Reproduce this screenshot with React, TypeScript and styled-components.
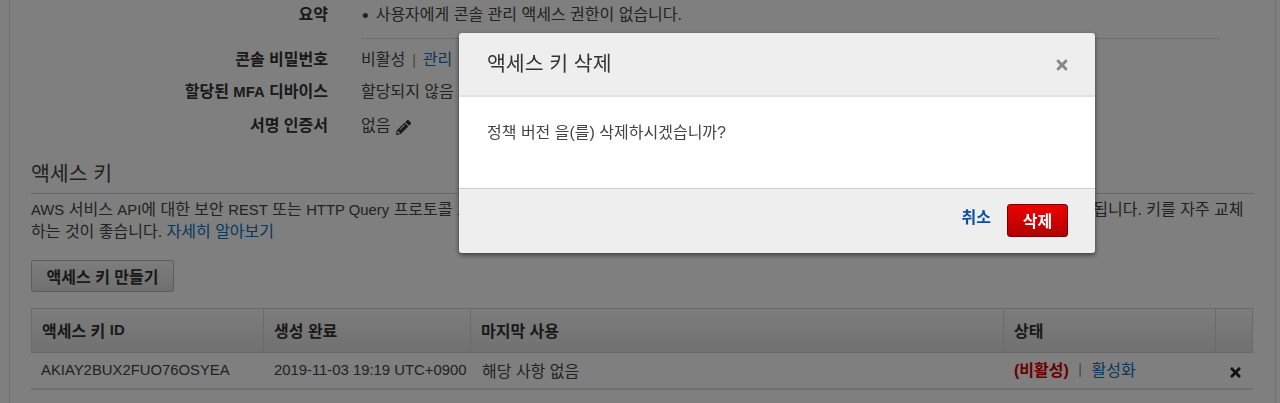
import styled, { createGlobalStyle } from "styled-components";
import { FaPencilAlt, FaTimes } from "react-icons/fa";

const GlobalStyle = createGlobalStyle`
  html, body {
    margin: 0;
    padding: 0;
    height: 100%;
    overflow: hidden;
    background: #fff;
    font-family: "Liberation Sans", "Noto Sans CJK KR", sans-serif;
    font-size: 16px;
    color: #444;
  }
`;

// latin runs sit a bit smaller than the hangul around them
const Lat = styled.span`
  font-size: 14.85px;
`;

const Page = styled.div`
  height: 403px;
  overflow: hidden;
  padding: 0 4px 0 9px;
`;

const Sheet = styled.div`
  height: 403px;
  border-left: 1px solid #ddd;
  border-right: 1px solid #ddd;
  padding: 4px 21px 0 21px;
  box-sizing: border-box;
`;

const SummaryGrid = styled.div`
  display: grid;
  grid-template-columns: 297px 1fr;
  column-gap: 33px;
  margin-right: 34px;
`;

const Label = styled.div<{ $h: number; $top?: number }>`
  height: ${(p) => p.$h}px;
  margin-top: ${(p) => p.$top ?? 0}px;
  line-height: 22px;
  text-align: right;
  font-weight: bold;
  color: #333;
  white-space: nowrap;
`;

const Value = styled.div<{ $h: number; $top?: number; $rule?: boolean }>`
  height: ${(p) => p.$h}px;
  margin-top: ${(p) => p.$top ?? 0}px;
  line-height: 22px;
  box-sizing: border-box;
  border-bottom: ${(p) => (p.$rule ? "1px solid #ddd" : "none")};
  display: flex;
  align-items: flex-start;
  gap: 6px;
`;

const Link = styled.a`
  color: #146eb4;
  text-decoration: none;
`;

const Pipe = styled.span`
  color: #888;
  font-size: 14px;
  margin: 0 1px;
`;

const Bullet = styled.span`
  font-size: 19px;
  margin: 1px 1px 0 1px;
`;

const Pencil = styled(FaPencilAlt)`
  width: 15px;
  height: 15px;
  color: #333;
  margin-top: 5px;
`;

const SectionTitle = styled.h2`
  margin: 24px 0 0;
  padding-bottom: 6px;
  font-size: 20.5px;
  line-height: 26px;
  font-weight: normal;
  color: #444;
  border-bottom: 1px solid #ccc;
`;

const Para = styled.p`
  margin: 5px 0 0;
  line-height: 21px;
  white-space: nowrap;
`;

const GreyButton = styled.button`
  display: block;
  margin-top: 18px;
  width: 143px;
  height: 32px;
  padding: 0;
  font: bold 16px "Liberation Sans", "Noto Sans CJK KR", sans-serif;
  color: #333;
  border: 1px solid #bbb;
  border-radius: 2px;
  background: linear-gradient(#fafafa, #e0e0e0);
`;

const KeyTable = styled.div`
  margin-top: 16px;
  display: grid;
  grid-template-columns: 233px 207px 533px 212px 37px;
`;

const HeadCell = styled.div`
  height: 45px;
  box-sizing: border-box;
  padding: 0 0 2px 10px;
  display: flex;
  align-items: center;
  font-weight: bold;
  color: #333;
  background: linear-gradient(#fafafa, #e2e2e2);
  border: solid #d5d5d5;
  border-width: 1px 1px 1px 0;
  &:first-child {
    border-left: 1px solid #d5d5d5;
  }
`;

const BodyCell = styled.div<{ $pad?: number }>`
  height: 37px;
  box-sizing: border-box;
  padding: 0 0 2px ${(p) => p.$pad ?? 10}px;
  display: flex;
  align-items: center;
  white-space: nowrap;
  border-bottom: 2px solid #e0e0e0;
`;

const StatusCell = styled(BodyCell)`
  gap: 8.5px;
  padding-bottom: 4px;
`;

const Inactive = styled.span`
  color: #d00000;
  font-weight: bold;
`;

const RowRemove = styled(FaTimes)`
  width: 15px;
  height: 15px;
  color: #222;
  margin: 6px 0 0 12px;
`;

const Overlay = styled.div`
  position: fixed;
  inset: 0;
  background: rgba(0, 0, 0, 0.5);
  padding: 33px 0 0 459px;
  box-sizing: border-box;
`;

const Modal = styled.div`
  width: 636px;
  height: 220px;
  border-radius: 3px;
  background: #eee;
  box-shadow: 0 2px 5px rgba(0, 0, 0, 0.55);
  display: flex;
  flex-direction: column;
  overflow: hidden;
`;

const ModalHeader = styled.div`
  height: 64px;
  box-sizing: border-box;
  padding: 0 25px 0 28px;
  border-bottom: 2px solid #e2e2e2;
  display: flex;
  justify-content: space-between;
  align-items: center;
`;

const ModalTitle = styled.h3`
  margin: 0 0 4px;
  font-size: 20.5px;
  font-weight: normal;
  color: #333;
`;

const CloseIcon = styled(FaTimes)`
  width: 16px;
  height: 16px;
  color: #888;
  margin-top: 2px;
`;

const ModalBody = styled.div`
  height: 91px;
  box-sizing: border-box;
  padding: 26px 28px 0;
  background: #fff;
  line-height: 20px;
  color: #444;
`;

const ModalFooter = styled.div`
  flex: 1;
  border-top: 1px solid #ccc;
  padding: 15px 27px 0 0;
  display: flex;
  justify-content: flex-end;
  align-items: flex-start;
  gap: 16px;
`;

const CancelLink = styled.a`
  color: #0b4f9e;
  font-weight: bold;
  line-height: 28px;
`;

const DangerButton = styled.button`
  width: 61px;
  height: 33px;
  padding: 0 0 2px;
  font: bold 16px "Liberation Sans", "Noto Sans CJK KR", sans-serif;
  color: #fff;
  border: 1px solid #7a0000;
  border-radius: 3px;
  background: linear-gradient(#ee0000, #b00000);
`;

export default function App() {
  return (
    <>
      <GlobalStyle />
      <Page>
        <Sheet>
          <SummaryGrid>
            <Label $h={34}>요약</Label>
            <Value $h={35} $rule>
              <Bullet>•</Bullet> 사용자에게 콘솔 관리 액세스 권한이 없습니다.
            </Value>
            <Label $h={32} $top={10}>콘솔 비밀번호</Label>
            <Value $h={32} $top={10}>
              비활성 <Pipe>|</Pipe> <Link>관리</Link>
            </Value>
            <Label $h={34}>
              할당된 <Lat>MFA</Lat> 디바이스
            </Label>
            <Value $h={34}>할당되지 않음</Value>
            <Label $h={22}>서명 인증서</Label>
            <Value $h={22}>
              없음 <Pencil />
            </Value>
          </SummaryGrid>

          <SectionTitle>액세스 키</SectionTitle>
          <Para>
            <Lat>AWS</Lat> 서비스 <Lat>API</Lat>에 대한 보안 <Lat>REST</Lat> 또는 <Lat>HTTP Query</Lat> 프로토콜 요청에 서명하려면 액세스 키를 씁니다.&nbsp; 액세스 키는 안전하게 보관해야 하며 변경하는 것이 권장됩니다. 키를 자주 교체
            <br />
            하는 것이 좋습니다. <Link>자세히 알아보기</Link>
          </Para>

          <GreyButton>액세스 키 만들기</GreyButton>

          <KeyTable>
            <HeadCell>
              액세스 키&nbsp;<Lat>ID</Lat>
            </HeadCell>
            <HeadCell>생성 완료</HeadCell>
            <HeadCell>마지막 사용</HeadCell>
            <HeadCell>상태</HeadCell>
            <HeadCell />
            <BodyCell><Lat>AKIAY2BUX2FUO76OSYEA</Lat></BodyCell>
            <BodyCell><Lat>2019-11-03 19:19 UTC+0900</Lat></BodyCell>
            <BodyCell $pad={11}>해당 사항 없음</BodyCell>
            <StatusCell>
              <Inactive>(비활성)</Inactive>
              <Pipe>|</Pipe>
              <Link>활성화</Link>
            </StatusCell>
            <BodyCell $pad={0}>
              <RowRemove />
            </BodyCell>
          </KeyTable>
        </Sheet>
      </Page>
      <Overlay>
        <Modal>
          <ModalHeader>
            <ModalTitle>액세스 키 삭제</ModalTitle>
            <CloseIcon />
          </ModalHeader>
          <ModalBody>정책 버전 을(를) 삭제하시겠습니까?</ModalBody>
          <ModalFooter>
            <CancelLink>취소</CancelLink>
            <DangerButton>삭제</DangerButton>
          </ModalFooter>
        </Modal>
      </Overlay>
    </>
  );
}
